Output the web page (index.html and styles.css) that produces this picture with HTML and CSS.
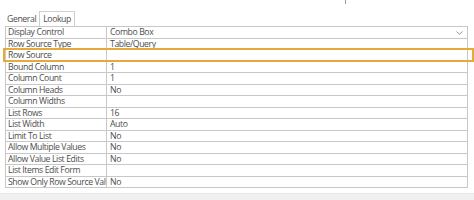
FILE: index.html
```
<!DOCTYPE html>
<html lang="en">
<head>
    <meta charset="UTF-8">
    <title>Lookup</title>
    <link rel="stylesheet" href="styles.css">
</head>
<body>
    <div class="tick"></div>
    <div class="sheet">
        <div class="tabs">
            <span class="tab">General</span>
            <span class="tab active">Lookup</span>
        </div>

        <div class="props">
            <div class="prop-row">
                <div class="prop-name">Display Control</div>
                <div class="prop-value">Combo Box
                    <svg class="chevron" width="7" height="4" viewBox="0 0 7 4">
                        <path d="M0.5 0.5 L3.5 3.3 L6.5 0.5" fill="none" stroke="#8a8a8a" stroke-width="0.9"/>
                    </svg>
                </div>
            </div>
            <div class="prop-row">
                <div class="prop-name">Row Source Type</div>
                <div class="prop-value">Table/Query</div>
            </div>
            <div class="prop-row">
                <div class="prop-name">Row Source</div>
                <div class="prop-value"></div>
            </div>
            <div class="prop-row">
                <div class="prop-name">Bound Column</div>
                <div class="prop-value">1</div>
            </div>
            <div class="prop-row">
                <div class="prop-name">Column Count</div>
                <div class="prop-value">1</div>
            </div>
            <div class="prop-row">
                <div class="prop-name">Column Heads</div>
                <div class="prop-value">No</div>
            </div>
            <div class="prop-row">
                <div class="prop-name">Column Widths</div>
                <div class="prop-value"></div>
            </div>
            <div class="prop-row">
                <div class="prop-name">List Rows</div>
                <div class="prop-value">16</div>
            </div>
            <div class="prop-row">
                <div class="prop-name">List Width</div>
                <div class="prop-value">Auto</div>
            </div>
            <div class="prop-row">
                <div class="prop-name">Limit To List</div>
                <div class="prop-value">No</div>
            </div>
            <div class="prop-row">
                <div class="prop-name">Allow Multiple Values</div>
                <div class="prop-value">No</div>
            </div>
            <div class="prop-row">
                <div class="prop-name">Allow Value List Edits</div>
                <div class="prop-value">No</div>
            </div>
            <div class="prop-row">
                <div class="prop-name">List Items Edit Form</div>
                <div class="prop-value"></div>
            </div>
            <div class="prop-row">
                <div class="prop-name">Show Only Row Source Values</div>
                <div class="prop-value">No</div>
            </div>

            <!-- focus outline around Row Source -->
            <div class="highlight"></div>
        </div>
    </div>
    <div class="footer"></div>
</body>
</html>
```

FILE: styles.css
```
* {
    margin: 0;
    padding: 0;
    box-sizing: border-box;
}

body {
    font-family: 'Open Sans', 'Noto Sans', sans-serif;
    font-size: 8.7px;
    letter-spacing: -0.4px;
    color: #4d4d4d;
    background: white;
    width: 474px;
    height: 200px;
    overflow: hidden;
    position: relative;
}

.tick {
    position: absolute;
    left: 345px;
    top: 0;
    width: 1px;
    height: 4px;
    background: #9a9a9a;
}

.sheet {
    padding-left: 5px;
    padding-top: 11px;
    width: 468px;
}

.tabs {
    display: flex;
    height: 15px;
    align-items: flex-end;
}

.tab {
    padding: 0 3px 0 2px;
    height: 13px;
    line-height: 12px;
}

.tab.active {
    height: 15px;
    line-height: 14px;
    background: white;
    border: 1px solid #cfcfcf;
    border-bottom: none;
    padding: 0 3px;
}

.props {
    position: relative;
    border: 1px solid #c8c8c8;
    border-bottom: none;
}

.prop-row {
    display: grid;
    grid-template-columns: 101px 1fr;
    height: 11.5px;
    border-bottom: 1px solid #c8c8c8;
}

.prop-name {
    padding-left: 2px;
    line-height: 10.5px;
    white-space: nowrap;
    overflow: hidden;
    border-right: 1px solid #c8c8c8;
}

.prop-value {
    padding-left: 3px;
    line-height: 10.5px;
    position: relative;
}

.chevron {
    position: absolute;
    right: 4px;
    top: 4px;
}

.highlight {
    position: absolute;
    left: -3px;
    right: -7px;
    top: 21px;
    height: 14px;
    border: 2px solid #e5a93c;
}

.footer {
    position: absolute;
    left: 0;
    right: 0;
    bottom: 0;
    height: 7px;
    background: #f0f0f0;
    border-top: 1px solid #e6e6e6;
}
```
